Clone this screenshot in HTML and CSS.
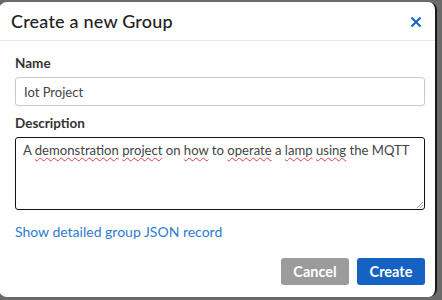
FILE: index.html
```html
<!DOCTYPE html>
<html>
<head>
	<title>Create a new Group</title>
	<link rel="stylesheet" href="styles.css">
</head>
<body>
<div class="backdrop">
  <div class="modal">
    <div class="modal-header">
      <h3 class="modal-title">Create a new Group</h3>
      <button class="close" aria-label="Close">
        <svg width="12" height="12" viewBox="0 0 12 12"><path d="M1.5 1.5 L10.5 10.5 M10.5 1.5 L1.5 10.5" stroke="#0f66c5" stroke-width="2" fill="none"/></svg>
      </button>
    </div>
    <div class="modal-body">
      <label class="field-label">Name</label>
      <input class="text-input" type="text" value="Iot Project">
      <label class="field-label">Description</label>
      <div class="text-area" role="textbox">A <span class="typo">demonstration</span> <span class="typo">project</span> on <span class="typo">how</span> to <span class="typo">operate</span> a <span class="typo">lamp</span> <span class="typo">using</span> the MQTT<span class="grip"></span></div>
      <a class="json-link" href="#">Show detailed group JSON record</a>
    </div>
    <div class="modal-footer">
      <button class="btn btn-cancel">Cancel</button>
      <button class="btn btn-create">Create</button>
    </div>
  </div>
</div>
</body>
</html>
```

FILE: styles.css
```css
html, body {
    margin: 0;
    height: 100%;
}

body {
    background: #6a6a6a;
    font-family: Lato, "Noto Sans", sans-serif;
    color: #333;
    overflow: hidden;
}

.backdrop {
    padding-top: 2px;
}

.modal {
    width: 438px;
    height: 295px;
    margin-left: -1px;
    background: #fff;
    border-radius: 8px;
    display: flex;
    flex-direction: column;
    box-sizing: border-box;
    border-right: 2px solid #1a1a1a;
}

.modal-header {
    display: flex;
    align-items: center;
    justify-content: space-between;
    height: 38px;
    padding: 0 12px 0 12px;
    border-bottom: 1px solid #e8e8e8;
}

.modal-title {
    margin: 0;
    font-size: 18px;
    font-weight: 500;
    color: #222;
    letter-spacing: 0.2px;
}

.close {
    border: 0;
    background: none;
    padding: 0;
    width: 14px;
    height: 14px;
    display: flex;
    align-items: center;
    justify-content: center;
    margin-top: 2px;
}

.modal-body {
    padding: 14px 10px 0 16px;
    display: flex;
    flex-direction: column;
}

.field-label {
    font-size: 13.5px;
    font-weight: bold;
    color: #333;
    margin-bottom: 6px;
}

.text-input {
    height: 29px;
    box-sizing: border-box;
    border: 1px solid #c8c8c8;
    border-radius: 3px;
    padding: 0 8px;
    font-family: inherit;
    font-size: 13px;
    color: #444;
    margin-bottom: 9px;
}

.text-area {
    position: relative;
    height: 73px;
    box-sizing: border-box;
    border: 1.5px solid #111;
    border-radius: 3px;
    padding: 4px 7px;
    font-size: 13.1px;
    color: #444;
    white-space: nowrap;
    margin-bottom: 13px;
}

.typo {
    text-decoration: underline wavy #e04040;
    text-decoration-thickness: 1px;
    text-underline-offset: 2px;
}

.grip {
    position: absolute;
    right: 1px;
    bottom: 1px;
    width: 6px;
    height: 6px;
    background: linear-gradient(135deg, transparent 45%, #999 45%, #999 55%, transparent 55%, transparent 70%, #999 70%, #999 80%, transparent 80%);
}

.json-link {
    font-size: 14px;
    color: #2e7bd0;
    text-decoration: none;
    align-self: flex-start;
}

.modal-footer {
    margin-top: auto;
    display: flex;
    justify-content: flex-end;
    gap: 8px;
    padding: 0 10px 12px 0;
}

.btn {
    border: 0;
    border-radius: 3px;
    height: 27px;
    padding: 0;
    font-family: inherit;
    font-size: 14.5px;
    font-weight: bold;
    color: #fff;
}

.btn-cancel {
    background: #9b9b9b;
    width: 68px;
}

.btn-create {
    background: #1463c2;
    width: 68px;
}
```
